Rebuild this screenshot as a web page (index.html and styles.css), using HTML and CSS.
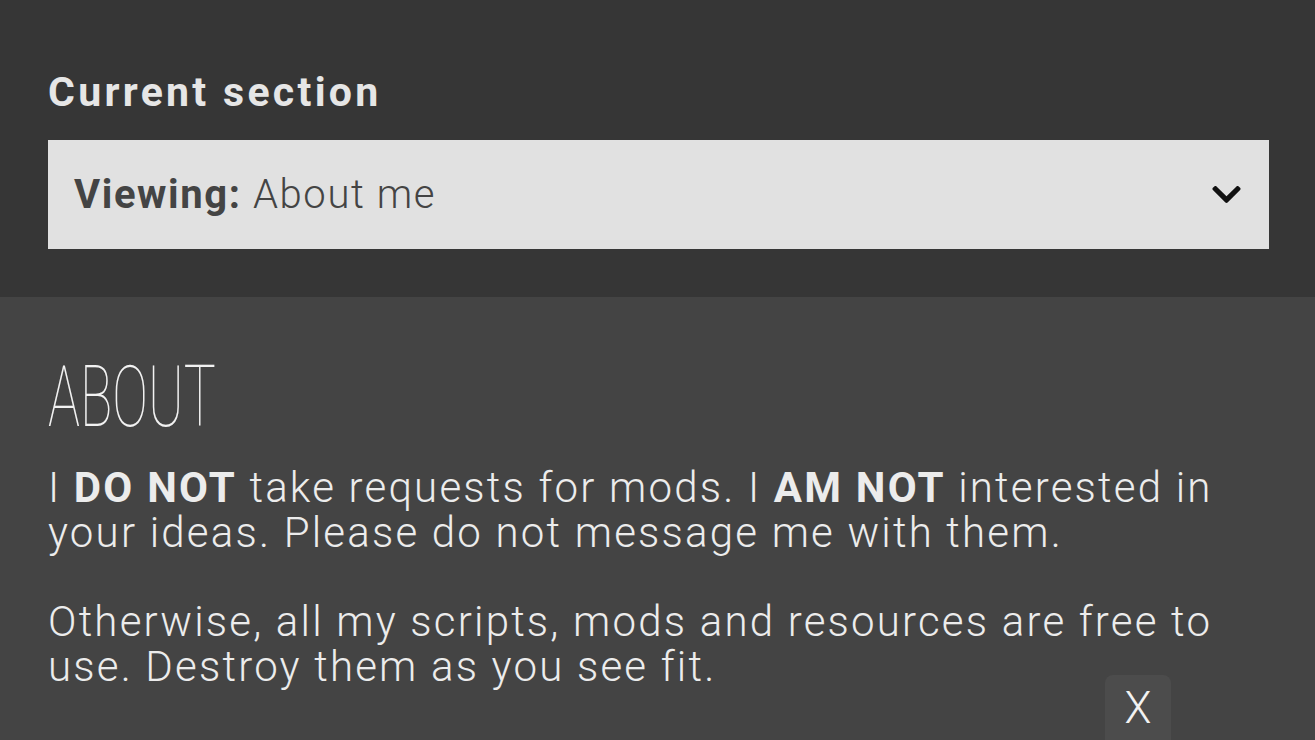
FILE: index.html
```html
<!DOCTYPE html>
<html lang="en">
<head>
    <meta charset="UTF-8">
    <meta name="viewport" content="width=device-width, initial-scale=1.0">
    <link rel="stylesheet" href="styles.css">
    <title>About</title>
</head>
<body>
    <header class="section-picker">
        <h3 class="section-picker__label">Current section</h3>
        <button class="section-picker__select">
            <span><b>Viewing:</b> About me</span>
            <svg class="section-picker__chevron" viewBox="0 0 448 512" width="33" height="33">
                <path fill="currentColor" d="M207 381.5L12.7 187.1c-9.4-9.4-9.4-24.6 0-33.9l22.7-22.7c9.4-9.4 24.5-9.4 33.9 0L224 284.5l154.7-154c9.4-9.3 24.5-9.3 33.9 0l22.7 22.7c9.4 9.4 9.4 24.6 0 33.9L241 381.5c-9.4 9.4-24.6 9.4-34 0z"/>
            </svg>
        </button>
    </header>

    <main class="content">
        <h1 class="content__title">About</h1>
        <p class="content__text">
            I <b>DO NOT</b> take requests for mods. I <b>AM NOT</b> interested in
            your ideas. Please do not message me with them.
        </p>
        <p class="content__text">
            Otherwise, all my scripts, mods and resources are free to
            use. Destroy them as you see fit.
        </p>
        <button class="close-tab">X</button>
    </main>
</body>
</html>
```

FILE: styles.css
```css
html, body {
    margin: 0;
    height: 100%;
    overflow: hidden;
}

body {
    font-family: Roboto, "Noto Sans", sans-serif;
    background-color: #444444;
    color: #ececec;
}

.section-picker {
    background-color: #363636;
    padding: 66px 46px 48px 48px;
}

.section-picker__label {
    margin: 0 0 22px;
    font-size: 41px;
    font-weight: 700;
    line-height: 52px;
    letter-spacing: 3.3px;
    color: #e6e6e6;
}

.section-picker__select {
    display: flex;
    align-items: center;
    justify-content: space-between;
    width: 100%;
    height: 109px;
    padding: 0 26px 0 26px;
    border: 0;
    background-color: #e1e1e1;
    color: #444444;
    font-family: inherit;
    font-size: 40px;
    font-weight: 300;
    letter-spacing: 1.6px;
    text-align: left;
}

.section-picker__select b {
    font-weight: 700;
}

.section-picker__chevron {
    color: #111111;
}

.content {
    position: relative;
    padding: 52px 48px 0 48px;
}

.content__title {
    margin: 0 0 20px;
    font-size: 85px;
    font-weight: 100;
    line-height: 96px;
    text-transform: uppercase;
    transform: scaleX(0.63);
    transform-origin: left center;
    color: #f2f2f2;
}

.content__text {
    margin: 0 0 44px;
    font-size: 42px;
    font-weight: 300;
    line-height: 45px;
    letter-spacing: 2.2px;
}

.content__text b {
    font-weight: 700;
}

.close-tab {
    position: absolute;
    left: 1105px;
    top: 378px;
    width: 66px;
    height: 80px;
    padding: 0 0 14px;
    border: 0;
    border-radius: 8px 8px 0 0;
    background-color: #4c4c4c;
    color: #f2f2f2;
    font-family: inherit;
    font-size: 44px;
    font-weight: 300;
}
```
